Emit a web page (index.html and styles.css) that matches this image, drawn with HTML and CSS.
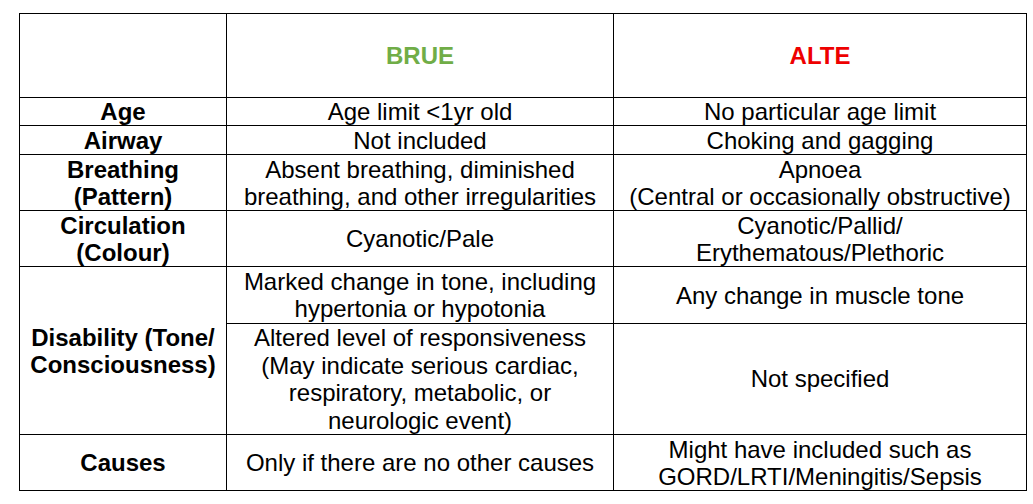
FILE: index.html
```html
<!DOCTYPE html>
<html>
<head>
<meta charset="utf-8">
<link rel="stylesheet" href="styles.css">
</head>
<body>
<table class="cmp">
  <colgroup>
    <col class="c1">
    <col class="c2">
    <col class="c3">
  </colgroup>
  <tr class="r-head">
    <th></th>
    <th class="brue">BRUE</th>
    <th class="alte">ALTE</th>
  </tr>
  <tr class="r-age">
    <th>Age</th>
    <td>Age limit &lt;1yr old</td>
    <td>No particular age limit</td>
  </tr>
  <tr class="r-air">
    <th>Airway</th>
    <td>Not included</td>
    <td>Choking and gagging</td>
  </tr>
  <tr class="r-br">
    <th>Breathing<br>(Pattern)</th>
    <td>Absent breathing, diminished<br>breathing, and other irregularities</td>
    <td>Apnoea<br>(Central or occasionally obstructive)</td>
  </tr>
  <tr class="r-circ">
    <th>Circulation<br>(Colour)</th>
    <td>Cyanotic/Pale</td>
    <td>Cyanotic/Pallid/<br>Erythematous/Plethoric</td>
  </tr>
  <tr class="r-d1">
    <th rowspan="2">Disability (Tone/<br>Consciousness)</th>
    <td>Marked change in tone, including<br>hypertonia or hypotonia</td>
    <td>Any change in muscle tone</td>
  </tr>
  <tr class="r-d2">
    <td>Altered level of responsiveness<br>(May indicate serious cardiac,<br>respiratory, metabolic, or<br>neurologic event)</td>
    <td>Not specified</td>
  </tr>
  <tr class="r-cause">
    <th>Causes</th>
    <td>Only if there are no other causes</td>
    <td>Might have included such as<br>GORD/LRTI/Meningitis/Sepsis</td>
  </tr>
</table>
</body>
</html>
```

FILE: styles.css
```css
html, body {
  margin: 0;
  padding: 0;
  background: #ffffff;
}

body {
  padding: 13px 0 0 19px;
  font-family: "Liberation Sans", Arial, sans-serif;
  color: #000000;
}

.cmp {
  border-collapse: collapse;
  table-layout: fixed;
  width: 1007px;
}

.c1 { width: 207px; }
.c2 { width: 387px; }
.c3 { width: 413px; }

.cmp th,
.cmp td {
  border: 1px solid #000000;
  padding: 0;
  text-align: center;
  vertical-align: middle;
  font-size: 24px;
  line-height: 27px;
  white-space: nowrap;
}

.cmp th {
  font-weight: bold;
}

.cmp td {
  font-weight: normal;
}

.r-head { height: 84px; }
.r-age { height: 28px; }
.r-air { height: 29px; }
.r-br { height: 56px; }
.r-circ { height: 56px; }
.r-d1 { height: 57px; }
.r-d2 { height: 111px; }
.r-cause { height: 56px; }

.r-d2 td {
  line-height: 27.6px;
}

.brue {
  color: #70ad47;
}

.alte {
  color: #ee0000;
}
```
